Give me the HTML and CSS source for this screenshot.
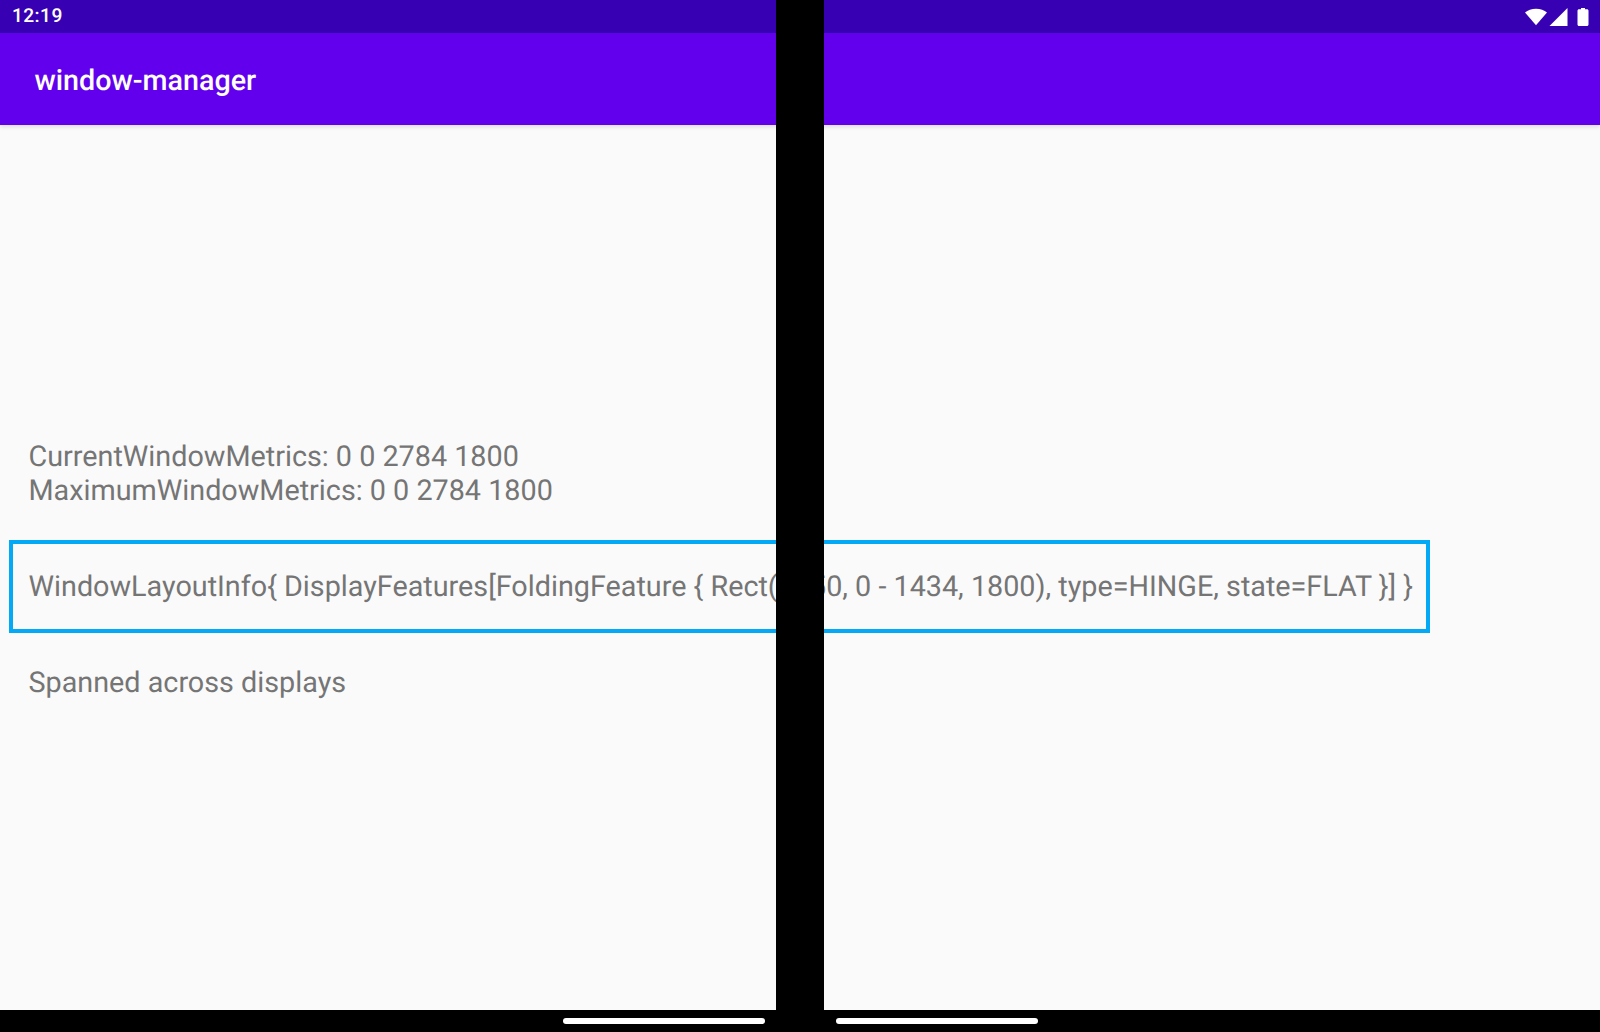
FILE: index.html
```html
<!DOCTYPE html>
<html lang="en">
<head>
<meta charset="utf-8">
<title>window-manager</title>
<link rel="stylesheet" href="styles.css">
</head>
<body>
<div class="device">
  <header class="status-bar">
    <span class="clock">12:19</span>
    <div class="status-icons">
      <svg class="icon-wifi" viewBox="0 0 24 18"><path d="M12 18 0 4.200C3 1.700 7.200 0 12 0s9 1.700 12 4.200z"/></svg>
      <svg class="icon-signal" viewBox="0 0 18 18"><path d="M18 0v18H0z"/></svg>
      <svg class="icon-battery" viewBox="0 0 11 18"><path d="M3.500 0h4v1.200h2c.8 0 1.500.7 1.500 1.500v13.800c0 .8-.7 1.500-1.500 1.500h-8C.7 18 0 17.300 0 16.500V2.700C0 1.900.7 1.200 1.500 1.200h2z"/></svg>
    </div>
  </header>
  <div class="toolbar">window-manager</div>
  <main class="content">
    <p class="metrics">CurrentWindowMetrics: 0 0 2784 1800<br>MaximumWindowMetrics: 0 0 2784 1800</p>
    <div class="layout-box">WindowLayoutInfo{ DisplayFeatures[FoldingFeature { Rect(1350, 0 - 1434, 1800), type=HINGE, state=FLAT }] }</div>
    <p class="spanned">Spanned across displays</p>
  </main>
  <footer class="nav-bar">
    <span class="handle"></span>
    <span class="handle"></span>
  </footer>
  <div class="hinge"></div>
</div>
</body>
</html>
```
FILE: styles.css
```css
* { box-sizing: border-box; }
html, body { margin: 0; padding: 0; }
body { background: #000; font-family: Roboto, "Liberation Sans", sans-serif; text-rendering: geometricPrecision; }
.device {
  position: relative;
  width: 1600px;
  height: 1032px;
  display: flex;
  flex-direction: column;
  overflow: hidden;
  background: #fafafa;
}
.status-bar {
  height: 33px;
  flex: none;
  background: #3700b3;
  color: #fff;
  display: flex;
  align-items: center;
  justify-content: space-between;
  padding: 0 11px 0 12px;
}
.clock { font-size: 19.200px; font-weight: 500; letter-spacing: 0.4px; line-height: 31px; margin-bottom: 2px; }
.status-icons { display: flex; align-items: center; gap: 2px; fill: #fff; }
.icon-wifi { width: 22px; height: 18px; display: block; }
.icon-signal { width: 19px; height: 18px; display: block; }
.icon-battery { width: 12px; height: 18px; display: block; margin-left: 7px; }
.toolbar {
  height: 92px;
  flex: none;
  background: #6200ee;
  color: #fff;
  font-size: 28.700px;
  font-weight: 500;
  line-height: 96px;
  padding-left: 34.500px;
  box-shadow: 0 2px 4px rgba(0,0,0,.12);
  position: relative;
}
.content {
  flex: 1;
  min-height: 0;
  padding-top: 316px;
  color: #757575;
  font-size: 28.750px;
  line-height: 33.500px;
}
.metrics { margin: 0 0 32px 28.500px; }
.layout-box {
  margin-left: 9px;
  width: 1421px;
  height: 93px;
  border: 4px solid #03a9f4;
  padding: 3px 0 0 15.500px;
  display: flex;
  align-items: center;
  white-space: nowrap;
}
.spanned { margin: 34px 0 0 28.500px; }
.nav-bar {
  height: 22px;
  flex: none;
  background: #000;
  display: flex;
  gap: 71px;
  padding: 8px 0 0 563px;
}
.handle { display: block; width: 202px; height: 6px; border-radius: 3px; background: #fff; }
.hinge {
  position: absolute;
  left: 776px;
  top: 0;
  width: 48px;
  height: 1032px;
  background: #000;
}
```
